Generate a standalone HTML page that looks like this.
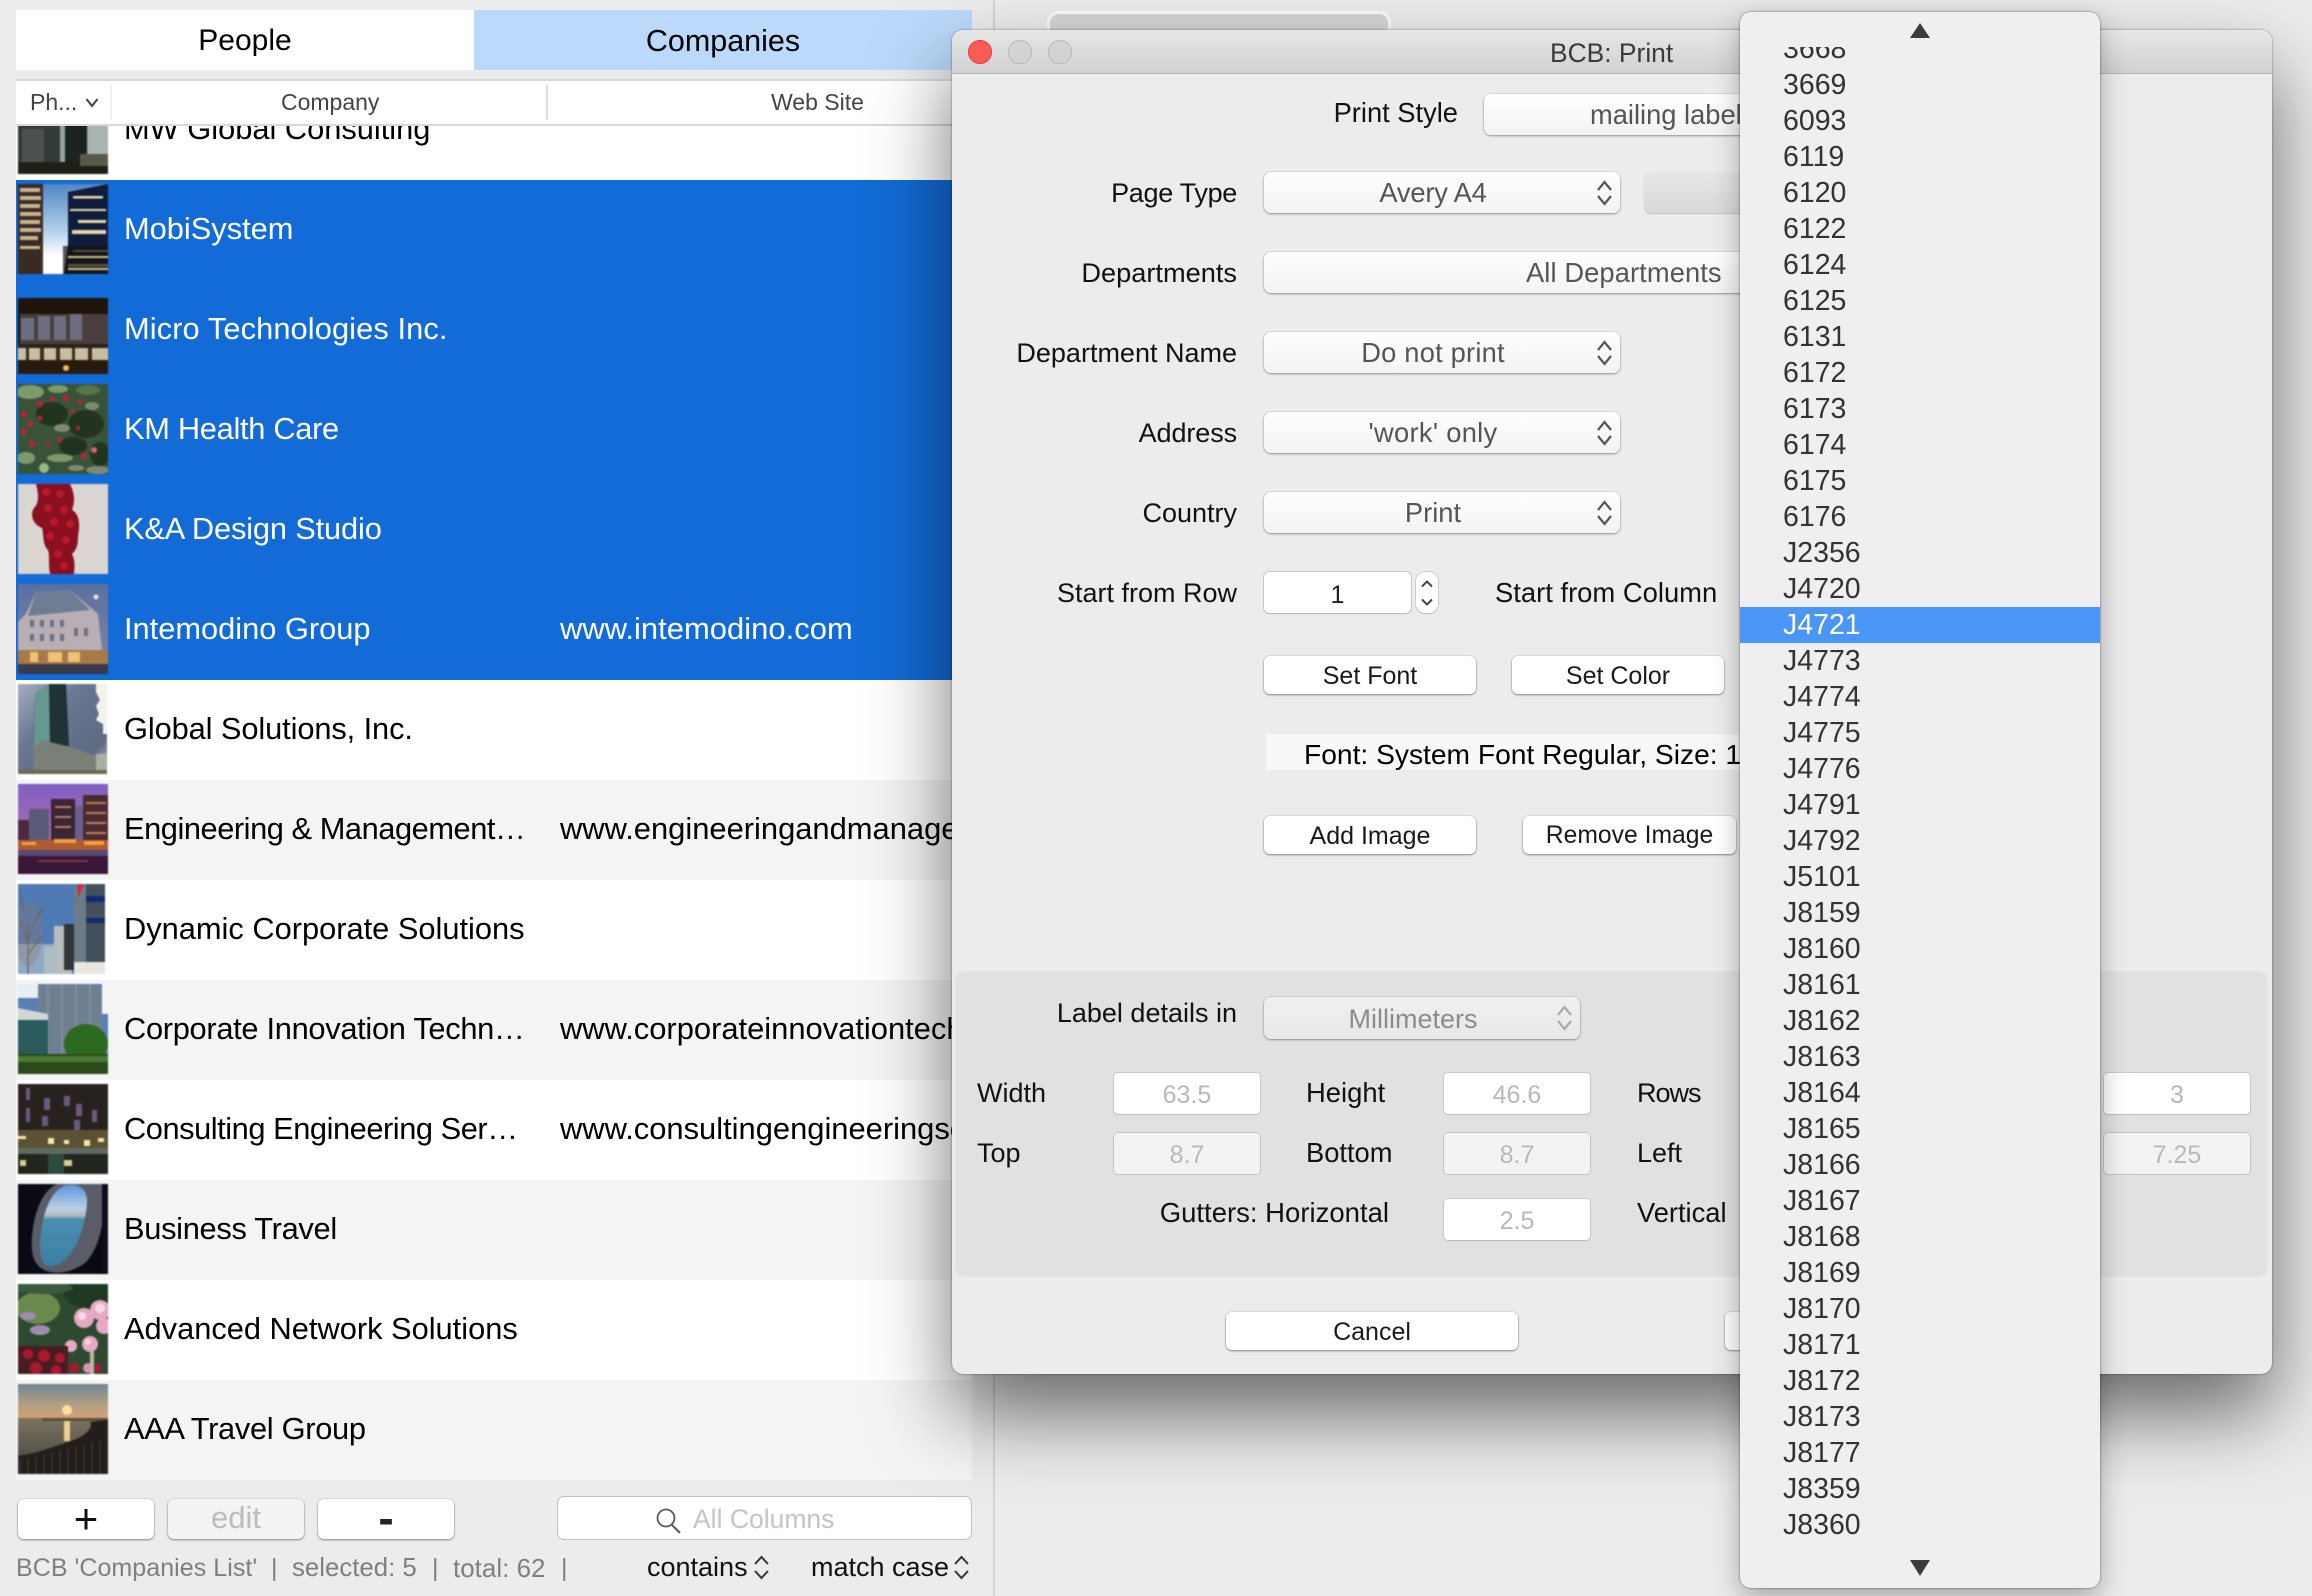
<!DOCTYPE html>
<html><head><meta charset="utf-8"><title>BCB: Print</title>
<style>
html,body{margin:0;padding:0;width:2312px;height:1596px;overflow:hidden;background:#ececec;font-family:"Liberation Sans",sans-serif;color:#111}
body{position:relative}
.a{position:absolute}
.t{position:absolute;white-space:nowrap}
.row{position:absolute;left:16px;width:956px;height:100px}
.n{position:absolute;left:108px;white-space:nowrap;font-size:30.8px;height:97px;line-height:97px;color:#000}
.u{position:absolute;left:544px;white-space:nowrap;font-size:30.9px;height:97px;line-height:97px;color:#000}
.s{background:#126bd6}.s .n,.s .u{color:#fff}
.g{background:#f4f4f4}.w{background:#fff}
.th{position:absolute;left:18px;display:block;filter:blur(.7px)}
.lb{position:absolute;right:1075px;white-space:nowrap;font-size:27px;height:40px;line-height:40px;color:#111}
.l2{position:absolute;white-space:nowrap;font-size:27px;height:40px;line-height:40px;color:#111}
.pop{position:absolute;left:1264px;width:356px;height:41px;border-radius:7px;background:linear-gradient(#fff,#f3f3f3);box-shadow:0 1px 2px rgba(0,0,0,.35),0 0 0 1px rgba(0,0,0,.06);color:#555;font-size:27.3px;line-height:42px;text-align:center}
.pop span{display:block;width:338px}
.pop svg{position:absolute;right:7px;top:8px}
.btn{position:absolute;background:#fff;border-radius:6px;box-shadow:0 1px 2px rgba(0,0,0,.4),0 0 0 1px rgba(0,0,0,.06);text-align:center;font-size:25px;line-height:40px;height:38px;color:#1a1a1a}
.fld{position:absolute;width:146px;height:41px;background:#fff;border-radius:4px;box-shadow:0 0 0 1px rgba(0,0,0,.1),0 1px 1px rgba(0,0,0,.08);text-align:center;color:#b8b8b8;font-size:25px;line-height:45px}
.fd{background:#f3f3f3;box-shadow:0 0 0 1px rgba(0,0,0,.13)}
.mi{height:36px;line-height:36px;padding-left:43px;font-size:28.5px;color:#333}
.st{position:absolute;top:1549px;white-space:nowrap;font-size:25px;height:38px;line-height:38px;color:#7f7f7f}
</style></head><body>

<!-- back window -->
<div class="a" style="left:993px;top:0;width:2px;height:1596px;background:#d4d4d4"></div>
<div class="a" style="left:1047px;top:11px;width:338px;height:40px;border:3px solid #fafafa;border-radius:12px 12px 0 0;background:#d6d6d6"></div>

<!-- tabs -->
<div class="a" style="left:16px;top:10px;width:458px;height:60px;background:#fff"></div>
<div class="a" style="left:474px;top:10px;width:498px;height:60px;background:#bbd9fb"></div>
<div class="t" style="left:16px;width:458px;top:11px;height:60px;line-height:60px;text-align:center;font-size:30px;color:#000">People</div>
<div class="t" style="left:474px;width:498px;top:11px;height:60px;line-height:60px;text-align:center;font-size:30.5px;color:#000">Companies</div>

<!-- list rows -->
<div class="a" style="left:0;top:126px;width:972px;height:1354px;overflow:hidden">
 <div style="position:absolute;left:0;top:-126px;width:972px;height:1480px">
  <div class="row w" style="top:80px"><div class="n">MW Global Consulting</div></div>
  <div class="row s" style="top:180px"><div class="n">MobiSystem</div></div>
  <div class="row s" style="top:280px"><div class="n" style="letter-spacing:.1px">Micro Technologies Inc.</div></div>
  <div class="row s" style="top:380px"><div class="n" style="letter-spacing:-.3px">KM Health Care</div></div>
  <div class="row s" style="top:480px"><div class="n" style="letter-spacing:-.15px">K&amp;A Design Studio</div></div>
  <div class="row s" style="top:580px"><div class="n">Intemodino Group</div><div class="u" style="letter-spacing:.05px">www.intemodino.com</div></div>
  <div class="row w" style="top:680px"><div class="n" style="letter-spacing:-.1px">Global Solutions, Inc.</div></div>
  <div class="row g" style="top:780px"><div class="n" style="letter-spacing:-.45px">Engineering &amp; Management…</div><div class="u">www.engineeringandmanagement.com</div></div>
  <div class="row w" style="top:880px"><div class="n">Dynamic Corporate Solutions</div></div>
  <div class="row g" style="top:980px"><div class="n" style="letter-spacing:-.3px">Corporate Innovation Techn…</div><div class="u">www.corporateinnovationtech.com</div></div>
  <div class="row w" style="top:1080px"><div class="n" style="letter-spacing:-.45px">Consulting Engineering Ser…</div><div class="u">www.consultingengineeringservices.com</div></div>
  <div class="row g" style="top:1180px"><div class="n" style="letter-spacing:-.3px">Business Travel</div></div>
  <div class="row w" style="top:1280px"><div class="n">Advanced Network Solutions</div></div>
  <div class="row g" style="top:1380px"><div class="n" style="letter-spacing:-.3px">AAA Travel Group</div></div>

  <!-- MW -->
  <svg class="th" style="top:84px" width="90" height="90" viewBox="0 0 90 90"><rect width="90" height="90" fill="#93a3a2"/><rect x="0" y="30" width="42" height="60" fill="#34393a"/><rect x="4" y="45" width="22" height="45" fill="#4c5250"/><rect x="47" y="20" width="22" height="70" fill="#1c2221"/><rect x="70" y="30" width="20" height="40" fill="#aab4ae"/><rect y="78" width="90" height="12" fill="#1f1f17"/><rect x="62" y="70" width="28" height="12" fill="#565a4a"/></svg>
  <!-- MobiSystem -->
  <svg class="th" style="top:184px" width="90" height="90" viewBox="0 0 90 90"><defs><linearGradient id="g1" x1="0" y1="0" x2="0" y2="1"><stop offset="0" stop-color="#4f87c4"/><stop offset=".55" stop-color="#b9d5ec"/><stop offset=".8" stop-color="#fff"/></linearGradient></defs><rect width="90" height="90" fill="url(#g1)"/><rect width="25" height="90" fill="#3a2a24"/><g fill="#cdb490"><rect x="2" y="4" width="20" height="4"/><rect x="2" y="12" width="21" height="4"/><rect x="2" y="20" width="20" height="4"/><rect x="2" y="28" width="21" height="4"/><rect x="2" y="36" width="20" height="4"/><rect x="2" y="44" width="21" height="4"/><rect x="2" y="52" width="18" height="4"/><rect x="2" y="62" width="20" height="3"/></g><path d="M50 8 L90 0 V90 H46 L50 60Z" fill="#101c3c"/><g fill="#e7d9a8"><rect x="55" y="12" width="30" height="2.500"/><rect x="52" y="25" width="36" height="2"/><rect x="60" y="36" width="28" height="3"/><rect x="54" y="46" width="34" height="4"/><rect x="55" y="66" width="35" height="2"/><rect x="50" y="80" width="40" height="3"/></g><rect x="45" y="62" width="45" height="28" fill="#15120f" opacity=".7"/><g fill="#d8c088"><rect x="50" y="72" width="40" height="2"/><rect x="50" y="84" width="40" height="2"/></g></svg>
  <!-- Micro -->
  <svg class="th" style="top:298px" width="90" height="76" viewBox="0 0 90 76"><rect width="90" height="76" fill="#20130a"/><rect x="2" y="16" width="88" height="30" fill="#4a3f3c"/><g fill="#6d6f80"><rect x="3" y="20" width="13" height="22"/><rect x="20" y="18" width="12" height="24"/><rect x="36" y="18" width="12" height="24"/><rect x="52" y="16" width="12" height="26"/></g><rect x="0" y="46" width="90" height="5" fill="#2b221a"/><g fill="#c8bea2"><rect y="50" width="90" height="12"/></g><g fill="#3a2c1f"><rect x="8" y="50" width="3" height="12"/><rect x="22" y="50" width="4" height="12"/><rect x="38" y="50" width="4" height="12"/><rect x="54" y="50" width="3" height="12"/><rect x="70" y="50" width="4" height="12"/></g><rect y="62" width="90" height="14" fill="#2a1a0c"/><circle cx="48" cy="70" r="3" fill="#f0b850"/></svg>
  <!-- KM -->
  <svg class="th" style="top:384px" width="90" height="90" viewBox="0 0 90 90"><rect width="90" height="90" fill="#38533a"/><g fill="#7d9a68"><ellipse cx="12" cy="8" rx="14" ry="7"/><ellipse cx="40" cy="5" rx="10" ry="4"/><ellipse cx="70" cy="6" rx="12" ry="5" fill="#577548"/><ellipse cx="8" cy="74" rx="9" ry="6"/><ellipse cx="42" cy="74" rx="13" ry="4"/><ellipse cx="26" cy="84" rx="5" ry="5" fill="#9ab682"/></g><g fill="#22331f"><ellipse cx="34" cy="30" rx="16" ry="12"/><ellipse cx="68" cy="40" rx="18" ry="14"/><ellipse cx="55" cy="62" rx="14" ry="9"/><ellipse cx="82" cy="70" rx="10" ry="12"/></g><g fill="#7e8a70"><ellipse cx="80" cy="86" rx="12" ry="4"/><ellipse cx="58" cy="84" rx="8" ry="3"/><ellipse cx="44" cy="44" rx="8" ry="4"/><ellipse cx="74" cy="22" rx="7" ry="4"/></g><g fill="#c01f33"><circle cx="22" cy="20" r="3"/><circle cx="34" cy="15" r="2.500"/><circle cx="48" cy="14" r="3"/><circle cx="62" cy="18" r="2.500"/><circle cx="6" cy="30" r="3"/><circle cx="12" cy="40" r="3"/><circle cx="6" cy="48" r="3"/><circle cx="22" cy="34" r="2.500"/><circle cx="14" cy="60" r="3"/><circle cx="54" cy="28" r="2"/><circle cx="42" cy="56" r="2.500"/><circle cx="66" cy="72" r="3"/><circle cx="76" cy="66" r="3" fill="#d8607a"/><circle cx="30" cy="60" r="2"/><circle cx="60" cy="44" r="2"/></g></svg>
  <!-- K&A -->
  <svg class="th" style="top:484px" width="90" height="90" viewBox="0 0 90 90"><rect width="90" height="90" fill="#dcd6d3"/><path d="M18 0H52C58 12 56 20 54 26C62 30 62 42 60 52C60 62 58 66 54 70C58 78 56 86 56 90H32C30 80 32 72 30 66C24 60 26 50 24 44C14 40 12 30 16 24C22 18 20 8 18 0Z" fill="#8a0f1f"/><g fill="#b8182c"><circle cx="28" cy="8" r="4"/><circle cx="42" cy="10" r="4"/><circle cx="30" cy="24" r="4"/><circle cx="46" cy="26" r="4"/><circle cx="36" cy="38" r="4"/><circle cx="52" cy="40" r="4"/><circle cx="32" cy="52" r="4"/><circle cx="48" cy="56" r="4"/><circle cx="40" cy="70" r="4"/><circle cx="46" cy="82" r="4"/></g></svg>
  <!-- Intemodino -->
  <svg class="th" style="top:584px" width="90" height="90" viewBox="0 0 90 90"><defs><linearGradient id="g6" x1="0" y1="0" x2="0" y2="1"><stop offset="0" stop-color="#5b6f9e"/><stop offset="1" stop-color="#8088a8"/></linearGradient></defs><rect width="90" height="90" fill="url(#g6)"/><path d="M8 30 L18 8 L52 6 L80 30 L84 66 L0 66 L0 38Z" fill="#b8aeb4"/><path d="M18 8 L52 6 L72 26 L10 32Z" fill="#6e7c94"/><g fill="#6a7184"><rect x="12" y="36" width="4" height="7"/><rect x="22" y="36" width="4" height="7"/><rect x="32" y="36" width="4" height="7"/><rect x="42" y="36" width="4" height="7"/><rect x="12" y="50" width="4" height="7"/><rect x="22" y="50" width="4" height="7"/><rect x="32" y="50" width="4" height="7"/><rect x="42" y="50" width="4" height="7"/><rect x="56" y="44" width="4" height="8"/><rect x="66" y="44" width="4" height="8"/></g><rect y="66" width="90" height="14" fill="#a87a48"/><g fill="#f2c070"><rect x="12" y="68" width="8" height="10"/><rect x="30" y="68" width="14" height="10"/><rect x="50" y="68" width="12" height="10"/></g><rect y="80" width="90" height="10" fill="#3a3a4a"/><circle cx="78" cy="13" r="2.500" fill="#e8e2e0"/></svg>
  <!-- Global -->
  <svg class="th" style="top:684px" width="89" height="90" viewBox="0 0 89 90"><defs><linearGradient id="g7" x1="0" y1="0" x2="1" y2="1"><stop offset="0" stop-color="#a5aec2"/><stop offset=".35" stop-color="#6d7892"/><stop offset=".8" stop-color="#5c6a82"/><stop offset="1" stop-color="#c6c8c6"/></linearGradient></defs><rect width="89" height="90" fill="url(#g7)"/><path d="M17 10 L31 0 L48 0 L51 62 L16 64Z" fill="#1f3236"/><path d="M17 10 L31 0 L32 64 L16 64Z" fill="#65988e"/><path d="M78 0H89V50H85V40L78 36L81 30L78 22L82 16L78 8Z" fill="#f3f3ee"/><path d="M16 64 L24 56 L56 64 L78 72 V90 H16Z" fill="#7a8078"/><rect x="78" y="70" width="11" height="16" fill="#aab09f"/><rect y="86" width="89" height="4" fill="#6c6a4c"/></svg>
  <!-- Engineering -->
  <svg class="th" style="top:784px" width="90" height="90" viewBox="0 0 90 90"><defs><linearGradient id="g8" x1="0" y1="0" x2="0" y2="1"><stop offset="0" stop-color="#7f5fc4"/><stop offset=".55" stop-color="#a66cae"/></linearGradient></defs><rect width="90" height="90" fill="url(#g8)"/><rect x="0" y="36" width="14" height="26" fill="#4a2a42"/><rect x="11" y="25" width="20" height="38" fill="#5a5a78"/><rect x="33" y="15" width="24" height="46" fill="#3a2436"/><rect x="57" y="22" width="10" height="40" fill="#6a6090"/><rect x="65" y="11" width="25" height="50" fill="#4a2a30"/><g fill="#c08060"><rect x="37" y="22" width="16" height="2"/><rect x="37" y="32" width="16" height="2"/><rect x="37" y="42" width="16" height="2"/><rect x="68" y="18" width="20" height="2"/><rect x="68" y="28" width="20" height="2"/><rect x="68" y="38" width="20" height="2"/><rect x="68" y="48" width="20" height="2"/></g><rect y="56" width="90" height="12" fill="#b05a30"/><g fill="#f0a040"><rect x="4" y="58" width="14" height="3"/><rect x="36" y="55" width="22" height="4"/><rect x="66" y="57" width="20" height="4"/></g><rect y="66" width="90" height="6" fill="#574a70"/><rect y="72" width="90" height="18" fill="#3a1638"/><rect x="20" y="76" width="50" height="2" fill="#7a3a40"/></svg>
  <!-- Dynamic -->
  <svg class="th" style="top:884px" width="87" height="90" viewBox="0 0 87 90"><rect width="87" height="90" fill="#4f7ab4"/><rect y="60" width="50" height="30" fill="#8fa9c4"/><rect x="56" y="2" width="31" height="84" fill="#6c7b88"/><rect x="68" y="0" width="19" height="90" fill="#41505a"/><g fill="#122a70"><rect x="68" y="12" width="19" height="6"/><rect x="68" y="34" width="19" height="5"/></g><path d="M60 0 L66 0 L60 14Z" fill="#d8282e"/><rect x="36" y="42" width="18" height="48" fill="#b8bdc0"/><rect x="46" y="40" width="10" height="46" fill="#2f3636"/><rect x="26" y="62" width="14" height="28" fill="#aebcc4"/><g stroke="#6b5a4c" stroke-width="1.200" fill="none"><path d="M10 90V38M10 60L2 34M10 55L20 30M10 70L24 52M6 30L3 10M18 36L26 22"/></g><ellipse cx="10" cy="50" rx="14" ry="32" fill="#8a7c72" opacity=".35"/><rect x="56" y="78" width="31" height="12" fill="#e8e8e0"/></svg>
  <!-- Corporate -->
  <svg class="th" style="top:984px" width="90" height="90" viewBox="0 0 90 90"><rect width="90" height="90" fill="#5a7fb4"/><rect width="20" height="14" fill="#e8eef4"/><rect x="84" width="6" height="30" fill="#f4f4f4"/><path d="M20 2C32 -2 62 -2 84 4V70H20Z" fill="#6f7f92"/><g stroke="#8a99a8" stroke-width="1"><path d="M30 0V70M44 0V70M58 0V70M72 0V70"/></g><path d="M0 24L30 30V74H0Z" fill="#cfd8d4"/><rect y="36" width="30" height="36" fill="#2a5a5c"/><ellipse cx="68" cy="60" rx="22" ry="20" fill="#2c6a20"/><rect y="70" width="90" height="20" fill="#2a4a1c"/><rect y="72" width="90" height="6" fill="#4a7a32"/></svg>
  <!-- Consulting -->
  <svg class="th" style="top:1084px" width="90" height="90" viewBox="0 0 90 90"><rect width="90" height="90" fill="#28221f"/><g fill="#6b5a80"><rect x="8" y="4" width="4" height="12"/><rect x="26" y="14" width="6" height="12"/><rect x="46" y="12" width="6" height="10"/><rect x="8" y="24" width="4" height="14"/><rect x="24" y="32" width="6" height="10"/><rect x="58" y="20" width="6" height="12"/><rect x="74" y="26" width="5" height="12"/><rect x="56" y="36" width="6" height="10"/></g><rect y="46" width="90" height="18" fill="#5a5232"/><g fill="#f2e8b0"><rect x="0" y="52" width="8" height="3"/><rect x="30" y="54" width="6" height="6"/><rect x="46" y="56" width="5" height="4"/><rect x="66" y="56" width="6" height="6"/><rect x="80" y="54" width="6" height="4"/></g><rect y="64" width="90" height="6" fill="#5e6a60"/><rect y="70" width="90" height="20" fill="#22241e"/><g fill="#d8cc90"><rect x="2" y="76" width="6" height="6"/><rect x="46" y="76" width="8" height="6"/></g><rect x="30" y="70" width="16" height="20" fill="#2d4a3c"/></svg>
  <!-- Business -->
  <svg class="th" style="top:1184px" width="90" height="90" viewBox="0 0 90 90"><defs><linearGradient id="g12" x1="0" y1="0" x2="0" y2="1"><stop offset="0" stop-color="#5a96de"/><stop offset=".3" stop-color="#bcd0e4"/><stop offset=".38" stop-color="#b0b8b8"/><stop offset=".42" stop-color="#4a8fb0"/><stop offset="1" stop-color="#3a7ea4"/></linearGradient></defs><rect width="90" height="90" fill="#0a0a12"/><path d="M14 66C12 36 24 4 40 0H84C88 30 84 60 68 78C52 92 16 96 14 66Z" fill="#5a5c68"/><path d="M22 62C22 40 30 4 50 1C62 0 70 6 69 20C67 44 58 68 44 78C32 86 22 84 22 62Z" fill="url(#g12)"/><rect x="84" y="0" width="6" height="90" fill="#0d0d18"/></svg>
  <!-- Advanced -->
  <svg class="th" style="top:1284px" width="90" height="90" viewBox="0 0 90 90"><rect width="90" height="90" fill="#2d4a30"/><ellipse cx="20" cy="24" rx="22" ry="16" fill="#6a8a4c"/><ellipse cx="70" cy="10" rx="24" ry="14" fill="#1e3a22"/><ellipse cx="25" cy="4" rx="30" ry="6" fill="#3a5a3c"/><g fill="#a08ab0"><ellipse cx="10" cy="32" rx="8" ry="4"/><ellipse cx="22" cy="46" rx="10" ry="5"/></g><g fill="#e7a8c4"><circle cx="66" cy="34" r="10"/><circle cx="82" cy="26" r="10"/><circle cx="86" cy="42" r="8"/><circle cx="72" cy="60" r="8"/><circle cx="53" cy="62" r="6"/></g><g fill="#f7d8e4"><circle cx="64" cy="32" r="4"/><circle cx="82" cy="24" r="5"/><circle cx="70" cy="58" r="3"/></g><rect y="62" width="50" height="28" fill="#4a1c22"/><g fill="#a81830"><circle cx="10" cy="70" r="5"/><circle cx="26" cy="72" r="6"/><circle cx="42" cy="74" r="5"/><circle cx="18" cy="84" r="6"/><circle cx="38" cy="86" r="5"/><circle cx="56" cy="84" r="5"/><circle cx="80" cy="84" r="4"/></g><circle cx="70" cy="84" r="5" fill="#e090b0"/><rect x="72" y="66" width="4" height="24" fill="#b8b8a0"/></svg>
  <!-- AAA -->
  <svg class="th" style="top:1384px" width="90" height="90" viewBox="0 0 90 90"><defs><linearGradient id="g14" x1="0" y1="0" x2="0" y2="1"><stop offset="0" stop-color="#6f8490"/><stop offset=".55" stop-color="#b09f84"/><stop offset="1" stop-color="#d9a070"/></linearGradient><linearGradient id="g15" x1="0" y1="0" x2="0" y2="1"><stop offset="0" stop-color="#7c7260"/><stop offset="1" stop-color="#3e423c"/></linearGradient></defs><rect width="90" height="36" fill="url(#g14)"/><rect y="34" width="90" height="56" fill="url(#g15)"/><rect x="24" y="34" width="66" height="3" fill="#5a5040"/><path d="M72 38C76 44 66 52 56 56L20 68L0 72V90H90V36Z" fill="#241e18"/><circle cx="49" cy="26" r="5" fill="#ffe0a0"/><rect x="46" y="37" width="6" height="20" fill="#f0d090"/><g stroke="#3d3d3d" stroke-width="1"><path d="M2 90V76M10 90V74M18 90V72M26 90V70M34 90V68M42 90V66M50 90V64M58 90V62M66 90V60M74 90V58M82 90V56"/></g></svg>
 </div>
</div>

<!-- table header -->
<div class="a" style="left:16px;top:79px;width:956px;height:47px;background:#fff;border-top:2px solid #d9d9d9;border-bottom:2px solid #d9d9d9;box-sizing:border-box"></div>
<div class="a" style="left:110px;top:85px;width:2px;height:35px;background:#f0f0f0"></div>
<div class="a" style="left:546px;top:85px;width:2px;height:35px;background:#dedede"></div>
<div class="t" style="left:30px;top:82px;height:40px;line-height:40px;font-size:23px;color:#444">Ph...</div>
<svg class="a" style="left:85px;top:97px" width="14" height="11" viewBox="0 0 14 11"><path d="M1.500 2L7 9L12.500 2" fill="none" stroke="#444" stroke-width="2"/></svg>
<div class="t" style="left:281px;top:82px;height:40px;line-height:40px;font-size:23px;color:#444">Company</div>
<div class="t" style="left:771px;top:82px;height:40px;line-height:40px;font-size:23px;color:#444">Web Site</div>

<!-- bottom bar -->
<div class="btn" style="left:18px;top:1499px;width:136px;height:40px;color:#111;font-size:42px;line-height:40px">+</div>
<div class="btn" style="left:168px;top:1499px;width:136px;height:40px;background:#f3f3f3;color:#bcbcbc;font-size:31px;line-height:38px">edit</div>
<div class="btn" style="left:318px;top:1499px;width:136px;height:40px;color:#222;font-size:46px;font-weight:bold;line-height:39px">-</div>
<div class="a" style="left:558px;top:1497px;width:413px;height:42px;background:#fff;border-radius:6px;box-shadow:0 0 0 1px rgba(0,0,0,.18)"></div>
<svg class="a" style="left:655px;top:1507px" width="30" height="28" viewBox="0 0 30 28"><circle cx="11" cy="11" r="8.500" fill="none" stroke="#5a5a5a" stroke-width="1.800"/><path d="M17 18L25 26" stroke="#5a5a5a" stroke-width="2"/></svg>
<div class="t" style="left:693px;top:1499px;height:40px;line-height:40px;font-size:26.5px;color:#c4c4c4">All Columns</div>
<div class="st" style="left:16px;letter-spacing:.05px">BCB 'Companies List'</div>
<div class="st" style="left:271px;color:#7f7f7f">|</div>
<div class="st" style="left:292px;font-size:25.8px">selected: 5</div>
<div class="st" style="left:432px">|</div>
<div class="st" style="left:453px;font-size:26px">total: 62</div>
<div class="st" style="left:561px">|</div>
<div class="st" style="left:647px;top:1548px;color:#111;font-size:27px">contains</div>
<svg class="a" style="left:753px;top:1555px" width="17" height="25" viewBox="0 0 17 25"><path d="M2 9L8.500 2L15 9M2 16L8.500 23L15 16" fill="none" stroke="#333" stroke-width="2"/></svg>
<div class="st" style="left:811px;top:1548px;color:#111;font-size:27px">match case</div>
<svg class="a" style="left:953px;top:1555px" width="17" height="25" viewBox="0 0 17 25"><path d="M2 9L8.500 2L15 9M2 16L8.500 23L15 16" fill="none" stroke="#333" stroke-width="2"/></svg>

<!-- dialog -->
<div class="a" style="left:952px;top:30px;width:1320px;height:1344px;border-radius:11px;background:#ececec;box-shadow:0 40px 80px rgba(0,0,0,.55),0 0 2px rgba(0,0,0,.45)"></div>
<div class="a" style="left:952px;top:30px;width:1320px;height:44px;border-radius:11px 11px 0 0;background:linear-gradient(#e8e7e8,#d2d1d2);border-bottom:1px solid #b4b4b4;box-sizing:border-box"></div>
<div class="a" style="left:968px;top:40px;width:24px;height:24px;border-radius:50%;background:#fc5b57;box-shadow:inset 0 0 0 1px #e0443e"></div>
<div class="a" style="left:1008px;top:40px;width:24px;height:24px;border-radius:50%;background:#d4d3d4;box-shadow:inset 0 0 0 1px #b8b7b8"></div>
<div class="a" style="left:1048px;top:40px;width:24px;height:24px;border-radius:50%;background:#d4d3d4;box-shadow:inset 0 0 0 1px #b8b7b8"></div>
<div class="t" style="left:1550px;top:33px;height:40px;line-height:40px;font-size:26.4px;color:#3a3a3a">BCB: Print</div>

<!-- form -->
<div class="lb" style="right:854px;top:93px;font-size:27.3px">Print Style</div>
<div class="pop" style="left:1484px;top:94px;width:300px"><span style="position:absolute;left:106px;width:auto;white-space:nowrap">mailing label</span></div>

<div class="lb" style="top:173px;letter-spacing:-.3px">Page Type</div>
<div class="pop" style="top:172px"><span style="letter-spacing:-.2px">Avery A4</span><svg width="17" height="26" viewBox="0 0 17 26"><path d="M2 10L8.500 2L15 10M2 16L8.500 24L15 16" fill="none" stroke="#555" stroke-width="2.200"/></svg></div>
<div class="a" style="left:1644px;top:172px;width:120px;height:41px;border-radius:7px;background:linear-gradient(#e6e6e6,#d9d9d9);box-shadow:0 1px 1px rgba(0,0,0,.2)"></div>

<div class="lb" style="top:253px;font-size:27.2px">Departments</div>
<div class="pop" style="top:252px;width:500px"><span style="position:absolute;left:262px;width:auto;white-space:nowrap;font-size:27.3px;letter-spacing:.1px">All Departments</span></div>

<div class="lb" style="top:333px">Department Name</div>
<div class="pop" style="top:332px"><span style="letter-spacing:.2px">Do not print</span><svg width="17" height="26" viewBox="0 0 17 26"><path d="M2 10L8.500 2L15 10M2 16L8.500 24L15 16" fill="none" stroke="#555" stroke-width="2.200"/></svg></div>

<div class="lb" style="top:413px;letter-spacing:-.1px">Address</div>
<div class="pop" style="top:412px"><span style="letter-spacing:.3px">'work' only</span><svg width="17" height="26" viewBox="0 0 17 26"><path d="M2 10L8.500 2L15 10M2 16L8.500 24L15 16" fill="none" stroke="#555" stroke-width="2.200"/></svg></div>

<div class="lb" style="top:493px">Country</div>
<div class="pop" style="top:492px"><span>Print</span><svg width="17" height="26" viewBox="0 0 17 26"><path d="M2 10L8.500 2L15 10M2 16L8.500 24L15 16" fill="none" stroke="#555" stroke-width="2.200"/></svg></div>

<div class="lb" style="top:573px">Start from Row</div>
<div class="a" style="left:1264px;top:572px;width:147px;height:41px;background:#fff;border-radius:5px;box-shadow:0 0 0 1px rgba(0,0,0,.15),0 1px 1px rgba(0,0,0,.1);text-align:center;font-size:25px;line-height:46px;color:#222">1</div>
<div class="a" style="left:1416px;top:572px;width:22px;height:41px;background:#fff;border-radius:9px;box-shadow:0 0 0 1px rgba(0,0,0,.12),0 1px 1px rgba(0,0,0,.1)"></div>
<svg class="a" style="left:1420px;top:578px" width="14" height="30" viewBox="0 0 14 30"><path d="M2 8.500L7 3.500L12 8.500M2 21.500L7 26.500L12 21.500" fill="none" stroke="#444" stroke-width="2"/></svg>
<div class="l2" style="left:1495px;top:573px;font-size:27.4px">Start from Column</div>

<div class="btn" style="left:1264px;top:656px;width:212px">Set Font</div>
<div class="btn" style="left:1512px;top:656px;width:212px">Set Color</div>
<div class="a" style="left:1266px;top:734px;width:500px;height:36px;background:#f8f8f8"></div>
<div class="t" style="left:1304px;top:735px;height:36px;line-height:38px;font-size:28.2px;color:#000">Font: System Font Regular, Size: 13.0</div>
<div class="btn" style="left:1264px;top:816px;width:212px">Add Image</div>
<div class="btn" style="left:1523px;top:816px;width:213px;font-size:24.7px">Remove Image</div>

<!-- group -->
<div class="a" style="left:956px;top:972px;width:1311px;height:304px;background:#e1e1e1;border-radius:9px;box-shadow:0 0 0 1px rgba(0,0,0,.03)"></div>
<div class="lb" style="top:993px">Label details in</div>
<div class="pop" style="top:997px;width:316px;height:42px;background:linear-gradient(#f0f0f0,#e8e8e8);color:#8c8c8c;font-size:27px;line-height:44px"><span style="width:298px">Millimeters</span><svg width="17" height="26" viewBox="0 0 17 26" style="top:8px"><path d="M2 10L8.500 2L15 10M2 16L8.500 24L15 16" fill="none" stroke="#aaa" stroke-width="2.200"/></svg></div>

<div class="l2" style="left:977px;top:1073px">Width</div>
<div class="fld" style="left:1114px;top:1073px">63.5</div>
<div class="l2" style="left:1306px;top:1073px;font-size:27.4px">Height</div>
<div class="fld" style="left:1444px;top:1073px">46.6</div>
<div class="l2" style="left:1637px;top:1073px;letter-spacing:-1px">Rows</div>
<div class="fld" style="left:2104px;top:1073px">3</div>

<div class="l2" style="left:977px;top:1133px">Top</div>
<div class="fld fd" style="left:1114px;top:1133px">8.7</div>
<div class="l2" style="left:1306px;top:1133px;font-size:27.3px">Bottom</div>
<div class="fld fd" style="left:1444px;top:1133px">8.7</div>
<div class="l2" style="left:1637px;top:1133px">Left</div>
<div class="fld fd" style="left:2104px;top:1133px">7.25</div>

<div class="lb" style="right:923px;top:1193px;font-size:27.5px">Gutters: Horizontal</div>
<div class="fld" style="left:1444px;top:1199px">2.5</div>
<div class="l2" style="left:1637px;top:1193px;font-size:27.3px">Vertical</div>

<div class="btn" style="left:1226px;top:1312px;width:292px">Cancel</div>
<div class="btn" style="left:1725px;top:1312px;width:292px">OK</div>

<!-- popup menu -->
<div class="a" style="left:1740px;top:12px;width:360px;height:1576px;border-radius:11px;background:#efefef;box-shadow:0 10px 28px rgba(0,0,0,.3),0 0 2px rgba(0,0,0,.5)"></div>
<div class="a" style="left:1740px;top:47px;width:360px;height:1501px;overflow:hidden">
 <div style="margin-top:-16px">
 <div class="mi">3668</div>
 <div class="mi">3669</div><div class="mi">6093</div><div class="mi">6119</div><div class="mi">6120</div><div class="mi">6122</div><div class="mi">6124</div><div class="mi">6125</div><div class="mi">6131</div><div class="mi">6172</div><div class="mi">6173</div><div class="mi">6174</div><div class="mi">6175</div><div class="mi">6176</div>
 <div class="mi">J2356</div><div class="mi">J4720</div>
 <div class="mi" style="background:#4a96f6;color:#fff">J4721</div>
 <div class="mi">J4773</div><div class="mi">J4774</div><div class="mi">J4775</div><div class="mi">J4776</div><div class="mi">J4791</div><div class="mi">J4792</div><div class="mi">J5101</div><div class="mi">J8159</div><div class="mi">J8160</div><div class="mi">J8161</div><div class="mi">J8162</div><div class="mi">J8163</div><div class="mi">J8164</div><div class="mi">J8165</div><div class="mi">J8166</div><div class="mi">J8167</div><div class="mi">J8168</div><div class="mi">J8169</div><div class="mi">J8170</div><div class="mi">J8171</div><div class="mi">J8172</div><div class="mi">J8173</div><div class="mi">J8177</div><div class="mi">J8359</div><div class="mi">J8360</div>
 </div>
</div>
<svg class="a" style="left:1910px;top:23px" width="20" height="15" viewBox="0 0 20 15"><path d="M10 0L20 15H0Z" fill="#3b3b3b"/></svg>
<svg class="a" style="left:1910px;top:1560px" width="20" height="16" viewBox="0 0 20 16"><path d="M0 0H20L10 16Z" fill="#3b3b3b"/></svg>
</body></html>
